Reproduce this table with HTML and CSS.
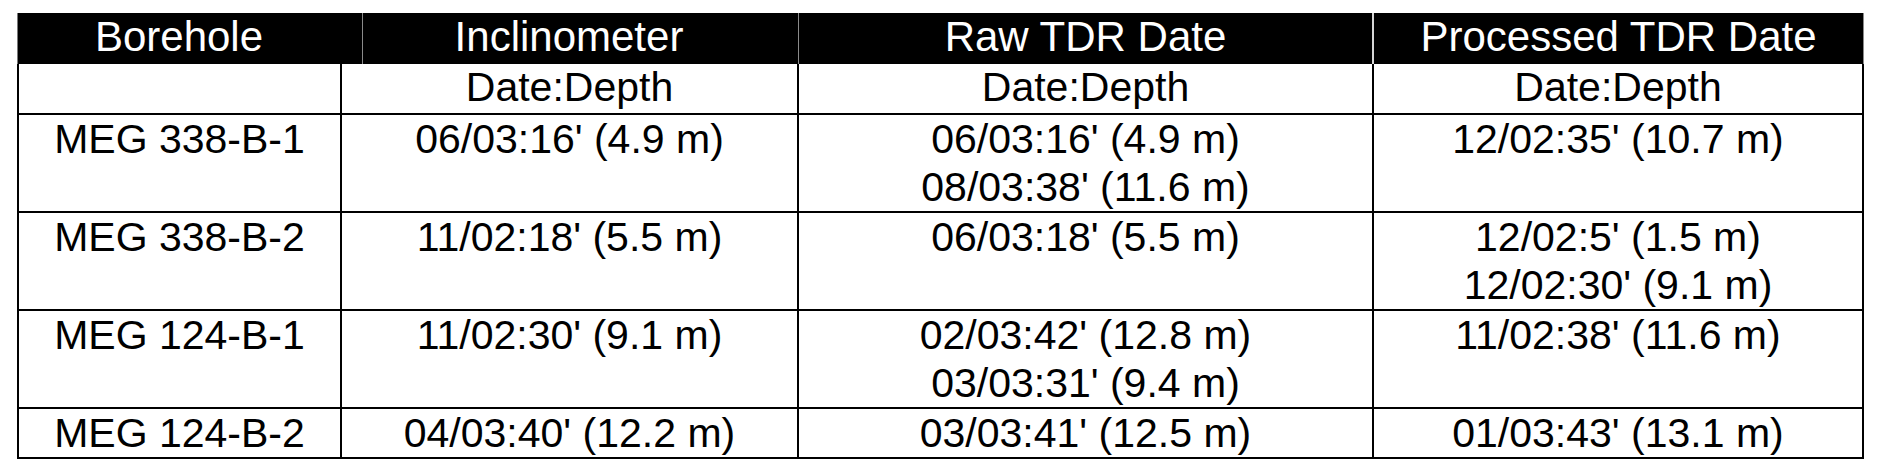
FILE: index.html
```html
<!DOCTYPE html>
<html lang="en">
<head>
<meta charset="utf-8">
<title>Borehole TDR table</title>
<link rel="stylesheet" href="styles.css">
</head>
<body>
<div class="table">
  <div class="head">
    <div class="hcell h1">Borehole</div>
    <div class="hcell h2">Inclinometer</div>
    <div class="hcell h3">Raw TDR Date</div>
    <div class="hcell h4">Processed TDR Date</div>
  </div>
  <div class="body">
    <div class="cell sub"></div>
    <div class="cell sub">Date:Depth</div>
    <div class="cell sub">Date:Depth</div>
    <div class="cell sub last">Date:Depth</div>

    <div class="cell tall">MEG 338-B-1</div>
    <div class="cell tall">06/03:16' (4.9 m)</div>
    <div class="cell tall">06/03:16' (4.9 m)<br>08/03:38' (11.6 m)</div>
    <div class="cell tall last">12/02:35' (10.7 m)</div>

    <div class="cell tall">MEG 338-B-2</div>
    <div class="cell tall">11/02:18' (5.5 m)</div>
    <div class="cell tall">06/03:18' (5.5 m)</div>
    <div class="cell tall last">12/02:5' (1.5 m)<br>12/02:30' (9.1 m)</div>

    <div class="cell tall">MEG 124-B-1</div>
    <div class="cell tall">11/02:30' (9.1 m)</div>
    <div class="cell tall">02/03:42' (12.8 m)<br>03/03:31' (9.4 m)</div>
    <div class="cell tall last">11/02:38' (11.6 m)</div>

    <div class="cell">MEG 124-B-2</div>
    <div class="cell">04/03:40' (12.2 m)</div>
    <div class="cell">03/03:41' (12.5 m)</div>
    <div class="cell last">01/03:43' (13.1 m)</div>
  </div>
</div>
</body>
</html>
```

FILE: styles.css
```css
html, body {
  margin: 0;
  padding: 0;
  background: #ffffff;
}

body {
  font-family: "Liberation Sans", Arial, Helvetica, sans-serif;
  font-size: 41px;
  color: #000000;
}

.table {
  margin: 13px 0 0 17px;
  width: 1847px;
}

.head {
  display: grid;
  grid-template-columns: 345px 436px 574px 1fr;
  background: #000000;
  color: #ffffff;
  height: 51px;
  font-size: 42px;
}

.hcell {
  text-align: center;
  line-height: 48px;
  white-space: nowrap;
}

.h1 {
  border-left: 1px solid #7a7a7a;
  padding-right: 22px;
}

.h2 {
  border-left: 1px solid #8a8a8a;
  padding-right: 23px;
}

.h3 {
  border-left: 1px solid #8a8a8a;
}

.h4 {
  border-left: 2px solid #d6d6d6;
  border-right: 1px solid #8a8a8a;
}

.body {
  display: grid;
  grid-template-columns: 323px 457px 575px 492px;
}

.cell {
  border-left: 2px solid #000000;
  border-bottom: 2px solid #000000;
  text-align: center;
  line-height: 48px;
  height: 48px;
  white-space: nowrap;
}

.cell.last {
  border-right: 2px solid #000000;
}

.cell.sub {
  height: 49px;
  line-height: 46px;
}

.cell.tall {
  height: 96px;
}
```
